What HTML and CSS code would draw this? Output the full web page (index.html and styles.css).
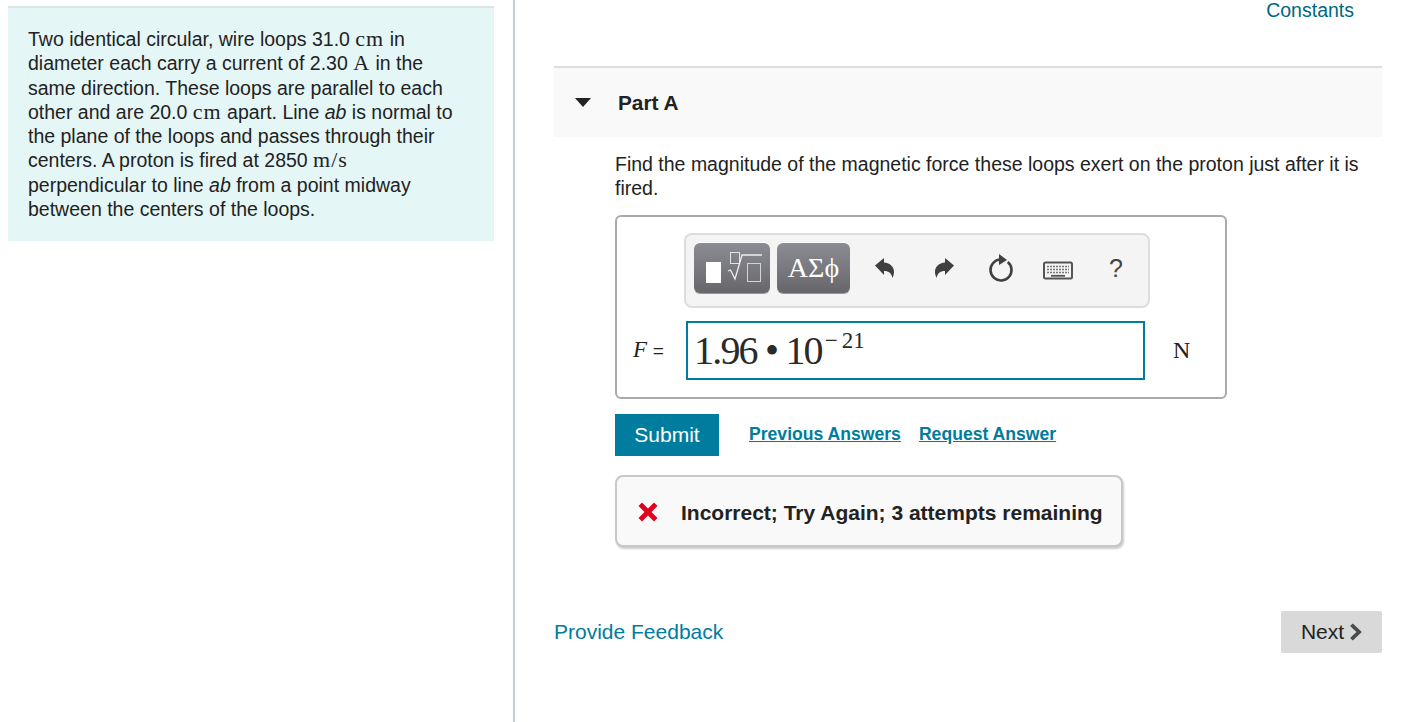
FILE: index.html
```html
<!DOCTYPE html>
<html lang="en">
<head>
  <meta charset="UTF-8" />
  <meta name="viewport" content="width=device-width, initial-scale=1.0" />
  <title>Part A</title>
  <link rel="stylesheet" href="styles.css">
</head>
<body>
  <div class="page">
    <aside class="left-col">
      <div class="intro">
        <p>Two identical circular, wire loops 31.0 <span class="unit">cm</span> in diameter each carry a current of 2.30 <span class="unit">A</span> in the same direction. These loops are parallel to each other and are 20.0 <span class="unit">cm</span> apart. Line <i>ab</i> is normal to the plane of the loops and passes through their centers. A proton is fired at 2850 <span class="unit">m/s</span> perpendicular to line <i>ab</i> from a point midway between the centers of the loops.</p>
      </div>
    </aside>

    <main class="right-col">
      <div class="constants"><a href="#">Constants</a></div>

      <section class="part">
        <div class="part-head">
          <span class="caret"></span>
          <h2>Part A</h2>
        </div>
        <div class="part-body">
          <p class="question">Find the magnitude of the magnetic force these loops exert on the proton just after it is fired.</p>

          <div class="answer-box">
            <div class="toolbar">
              <button class="tpl-btn tpl-first" type="button" aria-label="Templates">
                <svg width="76" height="50" viewBox="0 0 76 50">
                  <rect x="12" y="19" width="15" height="21" fill="#fff"/>
                  <rect x="36.500" y="9.500" width="9" height="11" fill="none" stroke="#e4e4e4"/>
                  <path d="M34 28l2.500 -1 4.500 9 7 -24h20" fill="none" stroke="#eee" stroke-width="1.300"/>
                  <rect x="53.500" y="20.500" width="13" height="18" fill="none" stroke="#d4d4d4"/>
                </svg>
              </button>
              <button class="tpl-btn tpl-second" type="button">ΑΣϕ</button>
              <button class="tool-btn" type="button" aria-label="Undo">
                <svg width="22" height="24" viewBox="0 0 22 24"><path d="M1 9.500L10 2v4.500c6 .5 10 4 10 9.500 0 2-.5 3.500-1.500 6-1-4.500-3.500-7-8.500-7v4z" fill="#404040"/></svg>
              </button>
              <button class="tool-btn" type="button" aria-label="Redo">
                <svg width="22" height="24" viewBox="0 0 22 24"><path d="M21 9.500L12 2v4.500c-6 .5-10 4-10 9.500 0 2 .5 3.500 1.500 6 1-4.500 3.500-7 8.500-7v4z" fill="#404040"/></svg>
              </button>
              <button class="tool-btn" type="button" aria-label="Reset">
                <svg width="26" height="30" viewBox="0 0 26 30"><circle cx="13" cy="17" r="10.500" fill="none" stroke="#404040" stroke-width="2.600" stroke-dasharray="58 8" transform="rotate(-50 13 17)"/><path d="M11 1l8 6-8 5z" fill="#404040"/></svg>
              </button>
              <button class="tool-btn" type="button" aria-label="Keyboard">
                <svg width="30" height="20" viewBox="0 0 30 20">
                  <rect x="1" y="1.500" width="28" height="16" rx="1.500" fill="#f4f4f4" stroke="#555" stroke-width="2"/>
                  <path d="M4 5.500h22M4 8.500h22" stroke="#777" stroke-width="1.500" stroke-dasharray="2 1"/>
                  <path d="M4 11.500h22" stroke="#777" stroke-width="1.500" stroke-dasharray="2 1"/>
                  <path d="M8 14.800h14" stroke="#555" stroke-width="1.800"/>
                </svg>
              </button>
              <button class="tool-btn help-btn" type="button">?</button>
            </div>

            <div class="answer-row">
              <span class="var"><i>F</i> <span class="eq">=</span></span>
              <div class="math-input">1.96 • 10<sup><span class="minus">−</span>21</sup></div>
              <span class="answer-unit">N</span>
            </div>
          </div>

          <div class="actions">
            <button class="submit" type="button">Submit</button>
            <a class="action-link" href="#">Previous Answers</a>
            <a class="action-link" href="#">Request Answer</a>
          </div>

          <div class="feedback">
            <svg class="x-icon" width="22" height="22" viewBox="0 0 22 22"><path d="M5 1.500L11 7.500l6-6 3.500 3.500-6 6 6 6-3.500 3.500-6-6-6 6L1.500 17l6-6-6-6z" fill="#e2001f"/></svg>
            <span>Incorrect; Try Again; 3 attempts remaining</span>
          </div>
        </div>
      </section>

      <div class="bottom-row">
        <a class="provide" href="#">Provide Feedback</a>
        <button class="next" type="button">Next
          <svg width="15" height="20" viewBox="0 0 14 18"><path d="M3.500 1L12 9l-8.500 8L1 14.500 7 9 1 3.500z" fill="#4a4a4a"/></svg>
        </button>
      </div>
    </main>
  </div>
</body>
</html>
```

FILE: styles.css
```css
* {
  box-sizing: border-box;
}
html, body {
  height: 100%;
}
body {
  margin: 0;
  font-family: "Liberation Sans", Arial, sans-serif;
  font-size: 20px;
  color: #222;
  background: #fff;
  overflow: hidden;
}
a {
  text-decoration: none;
}
button {
  font-family: inherit;
}
.page {
  display: flex;
  min-height: 100vh;
}

/* left column */
.left-col {
  width: 515px;
  flex: none;
  padding: 6px 19px 0 8px;
  border-right: 2px solid #c4ccdc;
}
.intro {
  height: 235px;
  padding: 19px 34px 0 20px;
  background: #e5f6f6;
  border-top: 2px solid #dde4e4;
}
.intro p {
  margin: 0;
  font-size: 19.5px;
  line-height: 24.3px;
}
.unit {
  font-family: "Liberation Serif", serif;
  font-size: 22px;
  line-height: 0;
  letter-spacing: 1px;
}

/* right column */
.right-col {
  flex: 1;
  padding: 0 41px 0 39px;
}
.constants {
  height: 66px;
  text-align: right;
  padding-right: 28px;
  line-height: 20px;
  font-size: 19.5px;
}
.constants a {
  color: #00687f;
}
.part-head {
  display: flex;
  align-items: center;
  height: 71px;
  background: #f9f9f9;
  border-top: 2px solid #ddd;
}
.caret {
  width: 0;
  height: 0;
  margin-left: 21px;
  border-left: 8px solid transparent;
  border-right: 8px solid transparent;
  border-top: 9px solid #222;
}
.part-head h2 {
  margin: 0 0 0 27px;
  font-size: 20.800px;
  font-weight: bold;
}
.part-body {
  padding: 15px 0 0 61px;
}
.question {
  margin: 0;
  font-size: 19.5px;
  line-height: 24.4px;
  width: 760px;
}
.answer-box {
  width: 612px;
  height: 184px;
  margin-top: 14px;
  padding: 16px 0 0 67px;
  border: 2px solid #aaa;
  border-radius: 6px;
}
.toolbar {
  display: flex;
  align-items: center;
  width: 466px;
  height: 75px;
  padding: 0 0 4px 8px;
  background: #f4f4f4;
  border: 2px solid #ddd;
  border-radius: 8px;
}
.tpl-btn {
  height: 50px;
  padding: 0;
  border: none;
  border-radius: 6px;
  color: #fff;
  background: linear-gradient(#8c8c94, #66666a);
  box-shadow: 0 -1px 0 #fff, 0 1px 0 #999;
}
.tpl-first {
  width: 76px;
  display: flex;
}
.tpl-second {
  width: 73px;
  margin-left: 7px;
  font-family: "Liberation Serif", serif;
  font-size: 28px;
}
.tool-btn {
  display: flex;
  align-items: center;
  justify-content: center;
  width: 30px;
  padding: 0;
  border: none;
  background: none;
  color: #444;
}
.tool-btn:nth-child(3) { margin-left: 20px; }
.tool-btn:nth-child(4) { margin-left: 29px; }
.tool-btn:nth-child(5) { margin-left: 27px; }
.tool-btn:nth-child(6) { margin-left: 27px; padding-top: 6px; }
.help-btn {
  margin-left: 28px;
  font-size: 25px;
}
.answer-row {
  display: flex;
  align-items: center;
  margin-top: 13px;
}
.var {
  width: 0;
  flex: none;
  white-space: nowrap;
  margin-left: -51px;
  font-family: "Liberation Serif", serif;
  font-size: 23px;
  color: #222;
}
.eq {
  font-family: "Liberation Sans", sans-serif;
  font-size: 19px;
}
.math-input {
  width: 459px;
  height: 59px;
  margin-left: 53px;
  padding: 5px 6px 0;
  border: 2px solid #007c9e;
  font-family: "Liberation Serif", serif;
  font-size: 40px;
  line-height: 46px;
  letter-spacing: -1.8px;
  color: #2a2a2a;
  white-space: nowrap;
}
.math-input sup {
  font-size: 23px;
  line-height: 0;
  letter-spacing: 0;
  vertical-align: 16px;
  margin-left: 3px;
}
.minus {
  margin-right: 4px;
}
.answer-unit {
  margin-left: 28px;
  font-family: "Liberation Serif", serif;
  font-size: 24px;
}
.actions {
  display: flex;
  align-items: center;
  margin-top: 15px;
}
.submit {
  width: 104px;
  height: 42px;
  padding: 0;
  border: none;
  background: #007c9e;
  color: #fff;
  font-size: 21px;
  margin-right: 30px;
}
.action-link {
  margin-right: 18px;
  color: #007c9e;
  font-size: 17.6px;
  font-weight: bold;
  text-decoration: underline;
}
.feedback {
  display: flex;
  align-items: center;
  width: 508px;
  height: 72px;
  margin-top: 19px;
  padding: 4px 0 0 20px;
  background: #f9f9f9;
  border: 2px solid #c8c8c8;
  border-radius: 8px;
  box-shadow: 1px 2px 2px #ccc;
  font-size: 21px;
  font-weight: bold;
}
.x-icon {
  flex: none;
  margin: -2px 22px 0 0;
}
.bottom-row {
  display: flex;
  align-items: center;
  justify-content: space-between;
  margin-top: 64px;
}
.provide {
  color: #007c9e;
  font-size: 21px;
}
.next {
  display: flex;
  align-items: center;
  justify-content: center;
  gap: 5px;
  width: 101px;
  height: 42px;
  padding: 0 0 0 2px;
  border: none;
  border-radius: 2px;
  background: #d9d9d9;
  color: #222;
  font-size: 21px;
}
```
